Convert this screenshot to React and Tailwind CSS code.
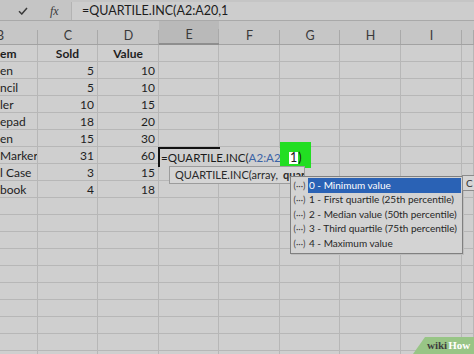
import React from "react";

const COLS = ["B", "C", "D", "E", "F", "G", "H", "I", ""];
const GRID = "grid grid-cols-[38px_60px_61px_60px_61px_60px_61px_61px_1fr]";

const data = [
  ["em", "Sold", "Value", true],
  ["en", "5", "10"],
  ["ncil", "5", "10"],
  ["ler", "10", "15"],
  ["epad", "18", "20"],
  ["en", "15", "30"],
  ["Marker", "31", "60"],
  ["l Case", "3", "15"],
  ["book", "4", "18"],
];

const options = [
  "0 - Minimum value",
  "1 - First quartile (25th percentile)",
  "2 - Median value (50th percentile)",
  "3 - Third quartile (75th percentile)",
  "4 - Maximum value",
];

const FormulaBar = () => (
  <div className="h-[21px] flex bg-[#c5c5c5] border-b border-[#a9a9a9]">
    <div className="w-[71px] flex items-center relative">
      <svg className="absolute left-[18px] top-[7px]" width="10" height="8" viewBox="0 0 10 8">
        <path d="M1 4.2 L3.8 7 L9 1" fill="none" stroke="#3a3a3a" strokeWidth="1.5" />
      </svg>
      <span className="absolute left-[50px] top-[2px] text-[12px] italic text-[#3a3a3a] font-['Liberation_Serif',serif]">
        fx
      </span>
    </div>
    <div className="flex-1 mt-[2px] bg-[#cdcdcd] border-l border-[#b3b3b3] pl-[10px] flex items-center text-[12.5px] text-[#1c1c1c]">
      =QUARTILE.INC(A2:A20,1
    </div>
  </div>
);

const HeaderRow = () => (
  <div className={`${GRID} h-[24px] bg-[#c6c6c6] border-b border-[#a2a2a2]`}>
    {COLS.map((c, i) => (
      <div
        key={i}
        className={`relative flex items-end justify-center pb-[2px] leading-none text-[12.5px] text-[#3a3a3a] ${
          c === "E" ? "bg-[#b9b9b9] border-b-2 border-[#8e8e8e] -mb-px" : ""
        } ${i === 0 ? "justify-start -ml-[4px]" : ""}`}
      >
        {c}
        <div className="absolute right-0 bottom-0 h-[14px] w-px bg-[#a9a9a9]" />
      </div>
    ))}
  </div>
);

const Row = ({ cells }) => {
  const [b, c, d, bold] = cells || [];
  const base = "h-[17px] border-r border-b border-[#b7b7b7] flex items-end pb-[1px] leading-none text-[12px] text-[#1e1e1e] overflow-hidden whitespace-nowrap";
  return (
    <div className={GRID}>
      <div className={`${base} ${bold ? "font-bold" : ""}`}>{b}</div>
      <div className={`${base} ${bold ? "font-bold justify-center" : "justify-end pr-[3px]"}`}>{c}</div>
      <div className={`${base} ${bold ? "font-bold justify-center" : "justify-end pr-[3px]"}`}>{d}</div>
      {[0, 1, 2, 3, 4, 5].map((k) => (
        <div key={k} className={base} />
      ))}
    </div>
  );
};

export default function App() {
  const rows = Array.from({ length: 19 }, (_, i) => data[i]);
  return (
    <div className="relative w-[474px] h-[354px] overflow-hidden bg-[#cfcfcf] font-['Lato',sans-serif]">
      <FormulaBar />
      <HeaderRow />
      {rows.map((r, i) => (
        <Row key={i} cells={r} />
      ))}

      {/* cell being edited */}
      <div className="absolute left-[158px] top-[148px] w-[122px] h-[18px] bg-[#cfcfcf]" />
      <div className="absolute left-[158px] top-[147px] w-[62px] h-[20px] border-t-2 border-l-2 border-[#111]" />
      <div className="absolute left-[161px] top-[149px] h-[17px] flex items-end pb-[2px] leading-none text-[11.6px] text-[#1a1a1a] whitespace-nowrap">
        =QUARTILE.INC(<span className="text-[#3b63a6]">A2:A2</span>
      </div>

      {/* green highlight */}
      <div className="absolute left-[280px] top-[142px] w-[31px] h-[26px] bg-[#22de22] flex items-end pb-[4px] pl-[9px] text-[12.5px] text-[#1a1a1a]">
        <span className="bg-white px-[1px] leading-[12px]">1</span>
        <span className="leading-[12px]">)</span>
      </div>

      {/* argument tooltip */}
      <div className="absolute left-[169px] top-[166px] w-[136px] h-[18px] bg-[#d5d5d5] border border-[#9c9c9c] pl-[5px] flex items-center text-[11px] text-[#2a2a2a] whitespace-nowrap overflow-hidden">
        QUARTILE.INC(array,<span className="font-bold ml-[5px]">quart</span>ile)
      </div>

      {/* autocomplete list */}
      <div className="absolute left-[290px] top-[176px] w-[173px] pt-px pb-[2px] bg-[#d3d3d3] border border-[#808080] shadow-[1px_1px_0_#bdbdbd]">
        {options.map((o, i) => (
          <div key={o} className="h-[14.5px] flex items-center text-[10px] whitespace-nowrap">
            <span className="w-[17px] text-[9px] text-[#444] text-center">(···)</span>
            <span
              className={`flex-1 h-full flex items-center pl-px ${
                i === 0 ? "bg-[#2a62b5] text-white mr-px" : "text-[#262626]"
              }`}
            >
              {o}
            </span>
          </div>
        ))}
      </div>

      {/* cut off tip */}
      <div className="absolute left-[462px] top-[175px] w-[20px] h-[16px] bg-[#d6d6d6] border border-[#8c8c8c] pl-[3px] flex items-center text-[10px] text-[#333]">
        C
      </div>

      {/* wikiHow */}
      <div className="absolute right-0 bottom-0 w-[61px] h-[17px] bg-[#98c586] [clip-path:polygon(12px_0,100%_0,100%_100%,0_100%)] flex items-center pl-[14px] font-['Liberation_Serif',serif] text-[11px] font-bold">
        <span className="text-[#3e3e3e]">wiki</span>
        <span className="text-white ml-[1px]">How</span>
      </div>
    </div>
  );
}
